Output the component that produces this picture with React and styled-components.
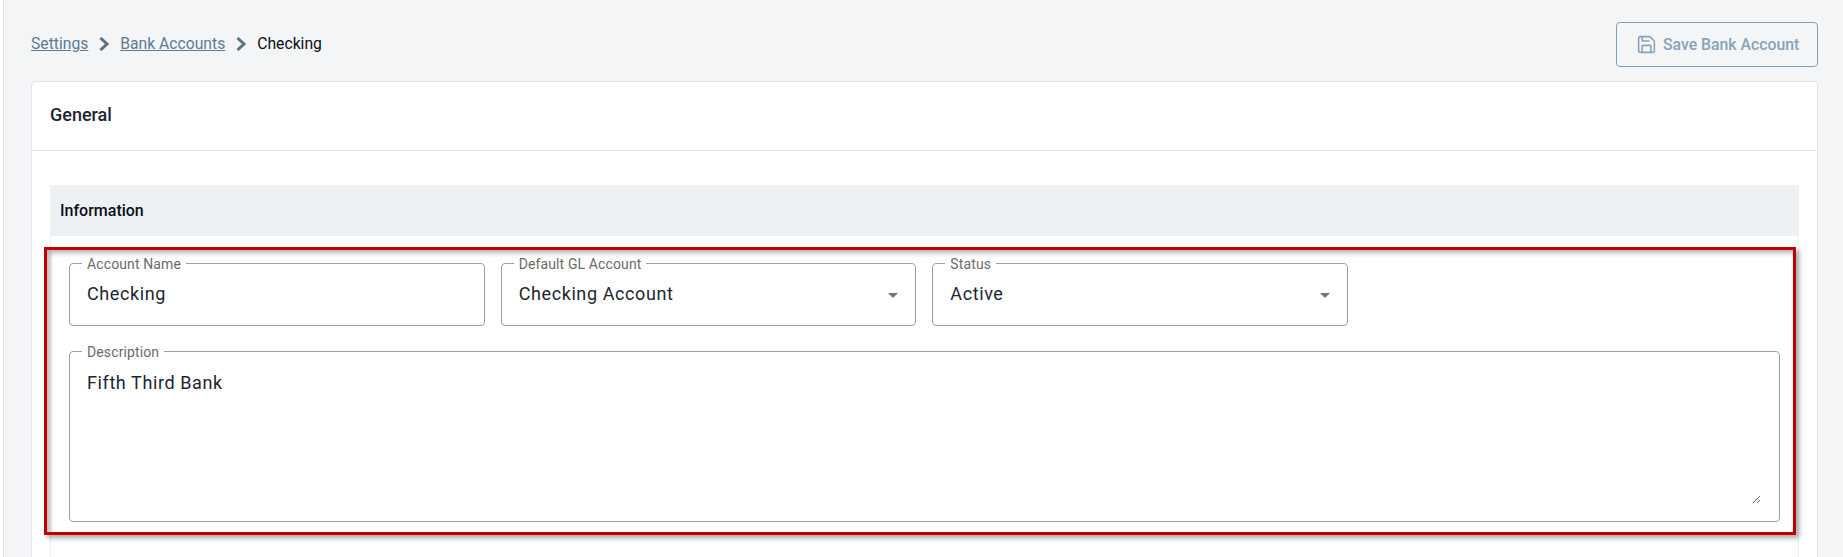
import React from "react";
import styled, { createGlobalStyle } from "styled-components";
import { Save } from "lucide-react";

const GlobalStyle = createGlobalStyle`
  html, body {
    margin: 0;
    height: 100%;
    overflow: hidden;
    background: #fff;
  }
  body {
    font-family: Roboto, "Liberation Sans", sans-serif;
  }
`;

const Page = styled.div`
  box-sizing: border-box;
  height: 557px;
  margin-left: 3px;
  padding: 22px 25px 0 27px;
  background: #f4f5f7;
  border-left: 1px solid #dfe1e5;
  overflow: hidden;
`;

const TopBar = styled.div`
  display: flex;
  align-items: center;
  justify-content: space-between;
  height: 44px;
  margin-bottom: 15px;
`;

const Crumbs = styled.nav`
  display: flex;
  align-items: center;
  font-size: 15.7px;
  line-height: 20px;
`;

const CrumbLink = styled.a`
  color: #5b7c93;
  text-decoration: underline;
`;

const CrumbCurrent = styled.span`
  color: #0b0f14;
`;

const CrumbSep = styled.svg`
  display: block;
  width: 12px;
  height: 14px;
  margin: 0 9px 0 11px;
  fill: none;
  stroke: #5d7280;
  stroke-width: 3;
`;

const SaveButton = styled.button`
  display: flex;
  align-items: center;
  gap: 6.5px;
  box-sizing: border-box;
  width: 202px;
  height: 45px;
  padding: 0 0 0 18.5px;
  background: transparent;
  border: 1px solid #7f9fb9;
  border-radius: 4px;
  color: #87a3b9;
  font-family: inherit;
  font-size: 15.8px;
  font-weight: 500;
`;

const Card = styled.section`
  background: #fff;
  border: 1px solid #e2e3ea;
  border-radius: 4px;
  height: 600px;
`;

const CardHeader = styled.div`
  display: flex;
  align-items: center;
  box-sizing: border-box;
  height: 69px;
  padding: 0 0 3px 18px;
  border-bottom: 1px solid #e2e3ea;
  color: #1c2630;
  font-size: 18px;
  font-weight: 500;
`;

const CardBody = styled.div`
  padding: 34px 18px 0 18px;
`;

const Section = styled.div`
  border-left: 1px solid #eff0f3;
  border-right: 1px solid #eff0f3;
  height: 400px;
`;

const SectionHeader = styled.div`
  display: flex;
  align-items: center;
  height: 51px;
  margin: 0 -1px;
  padding-left: 10px;
  background: #eef1f4;
  border-radius: 4px 4px 0 0;
  color: #0b0f14;
  font-size: 16px;
  font-weight: 500;
`;

const Highlight = styled.div`
  display: flex;
  flex-direction: column;
  gap: 25px;
  box-sizing: border-box;
  height: 288px;
  margin: 11px 2px 0 -7px;
  padding: 13px 13px 0 22px;
  border: 3px solid #c00000;
  box-shadow: 3px 3px 5px rgba(0, 0, 0, 0.35), inset 3px 3px 5px rgba(0, 0, 0, 0.3);
`;

const FieldRow = styled.div`
  display: flex;
  gap: 16px;
`;

const Field = styled.fieldset`
  display: flex;
  align-items: ${(p) => (p.$multiline ? "flex-start" : "center")};
  box-sizing: border-box;
  width: ${(p) => (p.$multiline ? "auto" : "415.67px")};
  height: ${(p) => (p.$multiline ? "171px" : "63px")};
  min-width: 0;
  margin: 0;
  padding: 0 10px 0 17px;
  border: 1px solid #a0a0a0;
  border-radius: 4px;
`;

const FieldLabel = styled.legend`
  margin-left: -5px;
  padding: 0 5px;
  color: #6b6b6b;
  font-size: 14px;
  line-height: 0;
  letter-spacing: 0.12px;
`;

const FieldValue = styled.span`
  flex: 1;
  margin-bottom: 2px;
  color: #1c2630;
  font-size: 18px;
  letter-spacing: 0.6px;
`;

const FieldInput = styled.textarea`
  flex: 1;
  display: block;
  height: 131px;
  margin: 21px 8px 0 0;
  padding: 0;
  border: 0;
  outline: 0;
  color: #1c2630;
  font-family: inherit;
  font-size: 18px;
  line-height: 20px;
  letter-spacing: 0.6px;
  resize: both;
`;

const Caret = styled.svg`
  display: block;
  width: 24px;
  height: 24px;
  fill: #757575;
`;

const SelectArrow = () => (
  <Caret viewBox="0 0 24 24">
    <path d="M7 10l5 5 5-5z" />
  </Caret>
);

const Chevron = () => (
  <CrumbSep viewBox="0 0 12 14">
    <path d="M1.500 1 8 7l-6.500 6" />
  </CrumbSep>
);

export default function App() {
  return (
    <>
      <GlobalStyle />
      <Page>
        <TopBar>
          <Crumbs>
            <CrumbLink>Settings</CrumbLink>
            <Chevron />
            <CrumbLink>Bank Accounts</CrumbLink>
            <Chevron />
            <CrumbCurrent>Checking</CrumbCurrent>
          </Crumbs>
          <SaveButton>
            <Save size={21} strokeWidth={1.8} />
            Save Bank Account
          </SaveButton>
        </TopBar>
        <Card>
          <CardHeader>General</CardHeader>
          <CardBody>
            <Section>
              <SectionHeader>Information</SectionHeader>
              <Highlight>
                <FieldRow>
                  <Field>
                    <FieldLabel>Account Name</FieldLabel>
                    <FieldValue>Checking</FieldValue>
                  </Field>
                  <Field>
                    <FieldLabel>Default GL Account</FieldLabel>
                    <FieldValue>Checking Account</FieldValue>
                    <SelectArrow />
                  </Field>
                  <Field>
                    <FieldLabel>Status</FieldLabel>
                    <FieldValue>Active</FieldValue>
                    <SelectArrow />
                  </Field>
                </FieldRow>
                <Field $multiline>
                  <FieldLabel>Description</FieldLabel>
                  <FieldInput defaultValue="Fifth Third Bank" />
                </Field>
              </Highlight>
            </Section>
          </CardBody>
        </Card>
      </Page>
    </>
  );
}
